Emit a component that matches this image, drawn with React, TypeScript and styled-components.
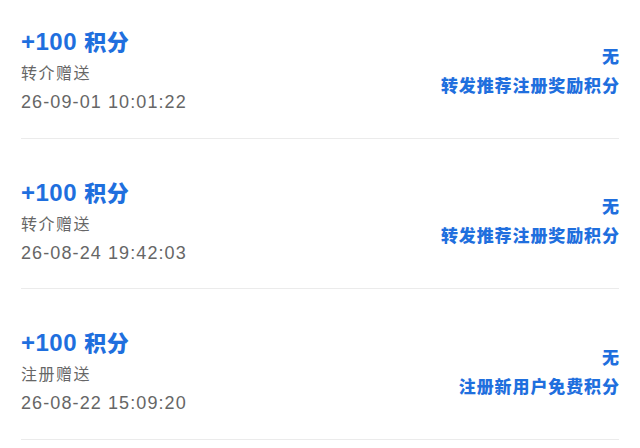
import styled, { createGlobalStyle } from "styled-components";

const GlobalStyle = createGlobalStyle`
  html, body {
    margin: 0;
    padding: 0;
    background: #ffffff;
  }
  body {
    font-family: "Liberation Sans", "Noto Sans CJK SC", sans-serif;
    overflow: hidden;
  }
`;

type Record = {
  points: string;
  source: string;
  time: string;
  remark: string;
  detail: string;
};

const records: Record[] = [
  {
    points: "+100",
    source: "转介赠送",
    time: "26-09-01 10:01:22",
    remark: "无",
    detail: "转发推荐注册奖励积分",
  },
  {
    points: "+100",
    source: "转介赠送",
    time: "26-08-24 19:42:03",
    remark: "无",
    detail: "转发推荐注册奖励积分",
  },
  {
    points: "+100",
    source: "注册赠送",
    time: "26-08-22 15:09:20",
    remark: "无",
    detail: "注册新用户免费积分",
  },
];

const App = () => {
  return (
    <>
      <GlobalStyle />
      <List>
        {records.map((r, i) => (
          <Row key={i}>
            <Left>
              <Points>
                {r.points} <span>积分</span>
              </Points>
              <Source>{r.source}</Source>
              <Time>{r.time}</Time>
            </Left>
            <Right>
              <Remark>{r.remark}</Remark>
              <Remark>{r.detail}</Remark>
            </Right>
          </Row>
        ))}
      </List>
    </>
  );
};

export default App;

const List = styled.div`
  padding: 0 21px;
`;

const Row = styled.div`
  display: flex;
  align-items: center;
  justify-content: space-between;
  padding: 40px 0 25.5px;
  border-bottom: 1px solid #ebebeb;

  &:first-child {
    padding-top: 28px;
  }
`;

const Left = styled.div`
  display: flex;
  flex-direction: column;
`;

const Points = styled.div`
  height: 24px;
  color: #1f6fde;
  font-size: 24px;
  font-weight: 700;
  line-height: 24px;
  letter-spacing: 0.5px;
  white-space: nowrap;

  span {
    font-family: "Noto Sans CJK SC", sans-serif;
    font-size: 22px;
    font-weight: 900;
    line-height: 24px;
  }
`;

const Source = styled.div`
  margin-top: 10px;
  color: #666666;
  font-family: "Noto Sans CJK SC", sans-serif;
  font-size: 16px;
  line-height: 20px;
  letter-spacing: 1.5px;
`;

const Time = styled.div`
  margin-top: 10px;
  color: #666666;
  font-size: 18px;
  line-height: 20px;
  letter-spacing: 1.1px;
`;

const Right = styled.div`
  display: flex;
  flex-direction: column;
  align-items: flex-end;
  gap: 9px;
`;

const Remark = styled.div`
  color: #1f6fde;
  font-family: "Noto Sans CJK SC", sans-serif;
  font-size: 17px;
  font-weight: 900;
  line-height: 20px;
  letter-spacing: 0.9px;
  margin-right: -0.9px;
`;
